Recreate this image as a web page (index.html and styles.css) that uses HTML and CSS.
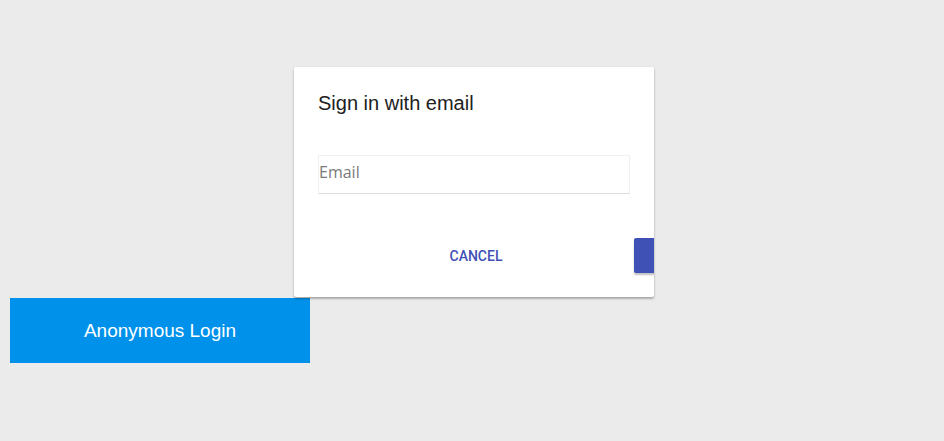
FILE: index.html
```html
<!DOCTYPE html>
<html lang="en">
<head>
    <meta charset="UTF-8">
    <meta name="viewport" content="width=device-width, initial-scale=1.0">
    <title>Login</title>
    <link rel="stylesheet" href="styles.css">
</head>
<body>
    <main class="page">
        <button class="anon-btn">Anonymous Login</button>
    </main>

    <!-- Dialog sign in dengan email -->
    <div class="dialog">
        <h1 class="dialog-title">Sign in with email</h1>
        <input class="email-input" type="email" placeholder="Email">
        <div class="dialog-actions">
            <button class="btn-cancel">Cancel</button>
            <button class="btn-next" aria-label="Next"></button>
        </div>
    </div>
</body>
</html>
```

FILE: styles.css
```css
* {
    margin: 0;
    padding: 0;
    box-sizing: border-box;
}

body {
    font-family: 'Liberation Sans', Arial, sans-serif;
    background-color: #ebebeb;
    color: #212121;
}

.page {
    padding: 298px 10px 0;
}

/* Tombol login anonim */
.anon-btn {
    display: block;
    width: 300px;
    height: 65px;
    border: none;
    background-color: #0091ea;
    color: white;
    font-family: 'Liberation Sans', Arial, sans-serif;
    font-size: 19px;
    cursor: pointer;
}

/* Dialog */
.dialog {
    position: absolute;
    top: 67px;
    left: 294px;
    width: 360px;
    height: 230px;
    padding: 24px;
    background-color: white;
    border-radius: 2px;
    box-shadow: 0 2px 2px rgba(0, 0, 0, 0.2), 0 1px 3px rgba(0, 0, 0, 0.15);
    overflow: hidden;
}

.dialog-title {
    font-size: 20px;
    font-weight: normal;
    line-height: 24px;
}

.email-input {
    display: block;
    width: 312px;
    height: 39px;
    margin-top: 40px;
    padding: 0 0 5px;
    border: 1px solid #f0f0f0;
    border-bottom-color: #dcdcdc;
    font-family: 'Open Sans', sans-serif;
    font-size: 16px;
    color: #333;
    outline: none;
}

.email-input::placeholder {
    color: #7a7a7a;
}

.dialog-actions {
    display: flex;
    margin-top: 44px;
}

.btn-cancel {
    flex: 0 0 316px;
    height: 35px;
    border: none;
    background: none;
    color: #3f51b5;
    font-family: Roboto, sans-serif;
    font-weight: 500;
    font-size: 14px;
    text-transform: uppercase;
    cursor: pointer;
}

.btn-next {
    flex: 0 0 88px;
    height: 35px;
    border: none;
    border-radius: 2px;
    background-color: #3f51b5;
    box-shadow: 0 2px 2px rgba(0, 0, 0, 0.25);
}
```
